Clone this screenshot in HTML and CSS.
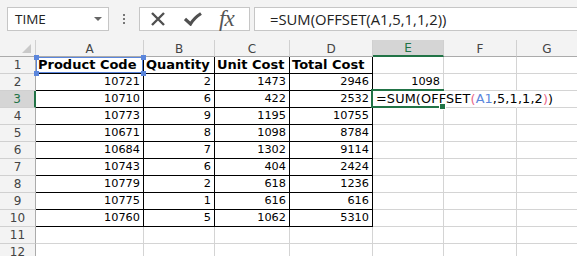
FILE: index.html
```html
<!DOCTYPE html>
<html>
<head>
<meta charset="utf-8">
<link rel="stylesheet" href="styles.css">
</head>
<body>
<div class="toolbar">
  <div class="namebox"><span class="nb-text">TIME</span><span class="nb-arrow"></span></div>
  <div class="grip"><i></i><i></i><i></i></div>
  <div class="fxbox">
    <svg class="ic-x" width="14" height="14" viewBox="0 0 14 14"><path d="M1 1 L13 13 M13 1 L1 13" stroke="#505050" stroke-width="2.4" fill="none"/></svg>
    <svg class="ic-check" width="18" height="14" viewBox="0 0 18 14"><path d="M1 7 L6.5 12 Q10 6 17 1.5" stroke="#505050" stroke-width="3.2" fill="none" stroke-linejoin="miter"/></svg>
    <span class="ic-fx">fx</span>
  </div>
  <div class="formula">=SUM(OFFSET(A1,5,1,1,2))</div>
</div>
<div class="sheet">
  <div class="hd corner"><span class="tri"></span></div>
  <div class="hd">A</div><div class="hd">B</div><div class="hd">C</div><div class="hd">D</div><div class="hd sel-col">E</div><div class="hd">F</div><div class="hd last">G</div>

  <div class="rh">1</div>
  <div class="c d b l a1">Product Code<span class="rng"></span><span class="sq tl"></span><span class="sq tr"></span><span class="sq bl"></span><span class="sq br"></span></div>
  <div class="c d b l">Quantity</div><div class="c d b l">Unit Cost</div><div class="c d b l">Total Cost</div>
  <div class="c"></div><div class="c"></div><div class="c last"></div>

  <div class="rh">2</div>
  <div class="c d">10721</div><div class="c d">2</div><div class="c d">1473</div><div class="c d">2946</div>
  <div class="c r">1098</div><div class="c"></div><div class="c last"></div>

  <div class="rh sel-row">3</div>
  <div class="c d">10710</div><div class="c d">6</div><div class="c d">422</div><div class="c d">2532</div>
  <div class="c active nr"><span class="ftxt">=SUM(OFFSET<span class="pk">(</span><span class="bl1">A1</span>,5,1,1,2<span class="pk">)</span>)</span><span class="abox"></span><span class="handle"></span></div><div class="c nr"></div><div class="c last"></div>

  <div class="rh">4</div>
  <div class="c d">10773</div><div class="c d">9</div><div class="c d">1195</div><div class="c d">10755</div>
  <div class="c"></div><div class="c"></div><div class="c last"></div>

  <div class="rh">5</div>
  <div class="c d">10671</div><div class="c d">8</div><div class="c d">1098</div><div class="c d">8784</div>
  <div class="c"></div><div class="c"></div><div class="c last"></div>

  <div class="rh">6</div>
  <div class="c d">10684</div><div class="c d">7</div><div class="c d">1302</div><div class="c d">9114</div>
  <div class="c"></div><div class="c"></div><div class="c last"></div>

  <div class="rh">7</div>
  <div class="c d">10743</div><div class="c d">6</div><div class="c d">404</div><div class="c d">2424</div>
  <div class="c"></div><div class="c"></div><div class="c last"></div>

  <div class="rh">8</div>
  <div class="c d">10779</div><div class="c d">2</div><div class="c d">618</div><div class="c d">1236</div>
  <div class="c"></div><div class="c"></div><div class="c last"></div>

  <div class="rh">9</div>
  <div class="c d">10775</div><div class="c d">1</div><div class="c d">616</div><div class="c d">616</div>
  <div class="c"></div><div class="c"></div><div class="c last"></div>

  <div class="rh">10</div>
  <div class="c d">10760</div><div class="c d">5</div><div class="c d">1062</div><div class="c d">5310</div>
  <div class="c"></div><div class="c"></div><div class="c last"></div>

  <div class="rh">11</div>
  <div class="c"></div><div class="c"></div><div class="c"></div><div class="c"></div><div class="c"></div><div class="c"></div><div class="c last"></div>

  <div class="rh">12</div>
  <div class="c"></div><div class="c"></div><div class="c"></div><div class="c"></div><div class="c"></div><div class="c"></div><div class="c last"></div>
</div>
</body>
</html>
```

FILE: styles.css
```css
html, body {
  margin: 0;
  padding: 0;
  background: #ffffff;
  overflow: hidden;
}
body {
  width: 577px;
  height: 256px;
}
.toolbar {
  height: 40px;
  background: #f3f3f3;
  display: flex;
  align-items: flex-start;
  padding-top: 7px;
  box-sizing: border-box;
}
.namebox {
  margin-left: 7px;
  width: 102px;
  height: 24px;
  box-sizing: border-box;
  background: #fff;
  border: 1px solid #c6c6c6;
  display: flex;
  align-items: center;
  justify-content: space-between;
  padding: 0 6px 0 7px;
  font-family: "Open Sans", sans-serif;
  font-size: 13.5px;
  color: #222;
}
.nb-arrow {
  width: 0;
  height: 0;
  border-left: 4px solid transparent;
  border-right: 4px solid transparent;
  border-top: 4px solid #666;
}
.grip {
  width: 30px;
  height: 24px;
  display: flex;
  flex-direction: column;
  align-items: center;
  justify-content: center;
  gap: 2px;
}
.grip i {
  display: block;
  width: 2px;
  height: 2px;
  background: #777;
}
.fxbox {
  width: 111px;
  height: 24px;
  box-sizing: border-box;
  background: #fff;
  border: 1px solid #c6c6c6;
  display: flex;
  align-items: center;
  position: relative;
}
.ic-x {
  margin-left: 11px;
}
.ic-check {
  margin-left: 19px;
}
.ic-fx {
  margin-left: 17px;
  font-family: "Liberation Serif", serif;
  font-style: italic;
  font-size: 23px;
  color: #555;
  line-height: 1;
  position: relative;
  top: -1px;
  letter-spacing: -1px;
}
.formula {
  margin-left: 4px;
  flex: 1;
  height: 24px;
  box-sizing: border-box;
  background: #fff;
  border: 1px solid #c6c6c6;
  border-right: none;
  padding-left: 15px;
  font-family: "Open Sans", sans-serif;
  font-size: 14.8px;
  line-height: 22px;
  color: #222;
}
.sheet {
  display: grid;
  grid-template-columns: 36px 108px 71px 75px 83px 71px 73px 1fr;
  grid-template-rows: 17px;
  grid-auto-rows: 17px;
  font-family: "DejaVu Sans", Verdana, sans-serif;
  font-size: 11.3px;
  color: #000;
}
.sheet > div {
  box-sizing: border-box;
  border-right: 1px solid #d4d4d4;
  border-bottom: 1px solid #d4d4d4;
  line-height: 16px;
  white-space: nowrap;
}
.sheet > .hd {
  background: #f3f3f3;
  border-right-color: #d0d0d0;
  border-bottom-color: #ababab;
  text-align: center;
  color: #444;
  font-size: 12px;
  line-height: 18px;
}
.sheet > .corner {
  position: relative;
}
.tri {
  position: absolute;
  right: 4px;
  bottom: 3px;
  width: 0;
  height: 0;
  border-left: 9px solid transparent;
  border-bottom: 9px solid #c9c9c9;
}
.sheet > .sel-col {
  background: #d5d5d5;
  color: #217346;
  border-bottom: 2px solid #217346;
  line-height: 17px;
}
.sheet > .rh {
  background: #f3f3f3;
  text-align: center;
  color: #444;
  border-right-color: #ababab;
  border-bottom-color: #d0d0d0;
  font-size: 12px;
}
.sheet > .sel-row {
  background: #d5d5d5;
  color: #217346;
  border-right: 2px solid #217346;
}
.sheet > .last {
  border-right: none;
}
.sheet > .c {
  padding: 0 3px;
  text-align: right;
}
.sheet > .d {
  border-right-color: #000;
  border-bottom-color: #000;
}
.sheet > .l {
  text-align: left;
  padding-left: 2px;
}
.sheet > .b {
  font-weight: bold;
  font-size: 13px;
}
.sheet > .nr {
  border-right-color: transparent;
}
.a1 {
  position: relative;
}
.rng {
  position: absolute;
  left: 0;
  top: 0;
  right: 0;
  bottom: 0;
  border: 1px solid #5b86dc;
}
.sq {
  position: absolute;
  width: 5px;
  height: 5px;
  background: #5b86dc;
}
.sq.tl { left: -2px; top: -2px; }
.sq.tr { right: -3px; top: -2px; }
.sq.bl { left: -2px; bottom: -3px; }
.sq.br { right: -3px; bottom: -3px; }
.active {
  position: relative;
  overflow: visible;
  z-index: 2;
}
.sheet > .active {
  text-align: left;
  padding-left: 3px;
  font-size: 12.8px;
  letter-spacing: 0.15px;
}
.ftxt {
  position: relative;
  z-index: 3;
  background: #fff;
}
.pk { color: #e8668a; }
.bl1 { color: #5b86dc; }
.abox {
  position: absolute;
  left: -2px;
  top: -2px;
  right: -1px;
  bottom: -1px;
  border: 2px solid #217346;
  z-index: 2;
}
.handle {
  position: absolute;
  right: -3px;
  bottom: -3px;
  width: 5px;
  height: 5px;
  background: #217346;
  border: 1px solid #fff;
  z-index: 4;
}
```
